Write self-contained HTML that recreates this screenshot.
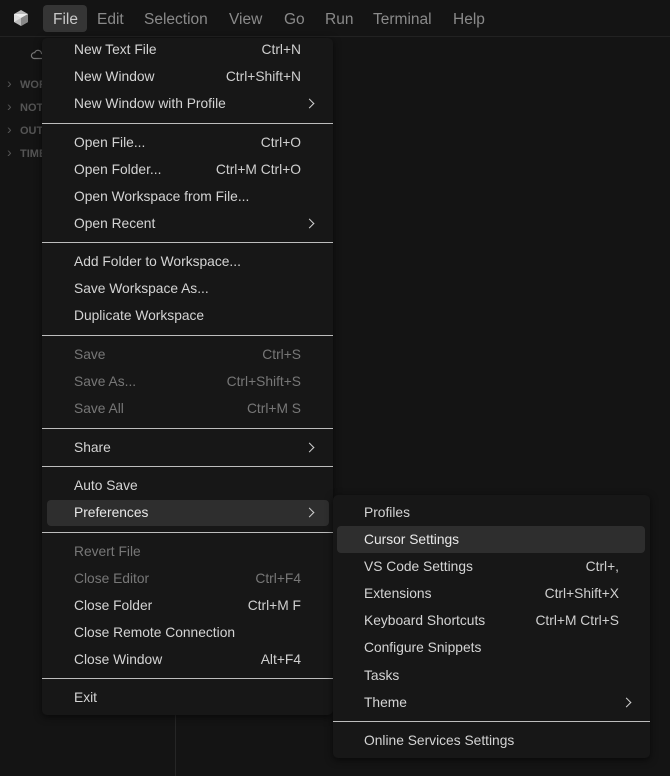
<!DOCTYPE html>
<html><head><meta charset="utf-8"><style>
*{margin:0;padding:0;box-sizing:border-box}
body{width:670px;height:776px;background:#141414;font-family:"Liberation Sans","DejaVu Sans",sans-serif;position:relative;overflow:hidden;color:#d0d0d0}
.bar{position:absolute;left:0;top:0;width:670px;height:37px;background:#141414;border-bottom:1px solid #222}
.mb{position:absolute;top:11px;font-size:15.5px;color:#8a8a8a}
.filebtn{position:absolute;left:43px;top:5px;width:44px;height:27px;background:#353535;border-radius:4px}
.side{position:absolute;font-size:11px;font-weight:bold;color:#555;left:20px}
.chev{position:absolute;left:7px;color:#555;font-size:14px}
.vline{position:absolute;left:175px;top:38px;width:1px;height:738px;background:#262626}
.menu{position:absolute;background:#171717;border-radius:5px;box-shadow:0 2px 8px rgba(0,0,0,.6)}
.it{position:absolute;font-size:13.8px;color:#d4d4d4;white-space:nowrap}
.sc{position:absolute;font-size:13.8px;color:#cfcfcf;text-align:right;white-space:nowrap}
.it.dis,.sc.dis{color:#777}
.sep{position:absolute;height:1px;background:#bdbdbd}
.hl{position:absolute;background:#2e2e2e;border-radius:4px}
.arr{position:absolute;width:7px;height:7px;border-right:1.3px solid #cfcfcf;border-top:1.3px solid #cfcfcf;transform:rotate(45deg)}
</style></head><body>
<div class="bar"></div>
<svg style="position:absolute;left:12px;top:9px" width="18" height="18" viewBox="0 0 18 18"><polygon points="9,1 16,5 16,13 9,17 2,13 2,5" fill="#bbb"/><polygon points="2,5 16,5 9,9" fill="#eee"/><polygon points="9,9 16,5 16,13 9,17" fill="#888"/><polygon points="9,9 2,5 2,13" fill="#ddd"/></svg>
<div class="filebtn"></div>
<div class="mb" style="left:53px;color:#c8c8c8">File</div>
<div class="mb" style="left:97px">Edit</div>
<div class="mb" style="left:144px">Selection</div>
<div class="mb" style="left:229px">View</div>
<div class="mb" style="left:284px">Go</div>
<div class="mb" style="left:325px">Run</div>
<div class="mb" style="left:373px">Terminal</div>
<div class="mb" style="left:453px">Help</div>
<div class="vline"></div>
<svg style="position:absolute;left:30px;top:48px" width="15" height="12" viewBox="0 0 15 12"><path d="M4 10.5h7.5a2.5 2.5 0 0 0 0-5 3.5 3.5 0 0 0-6.8-.8A2.8 2.8 0 0 0 4 10.5z" fill="none" stroke="#777" stroke-width="1.2"/></svg>
<div class="chev" style="top:75px">&#8250;</div><div class="side" style="top:79px">WORKSPACE</div>
<div class="chev" style="top:98px">&#8250;</div><div class="side" style="top:102px">NOTEPADS</div>
<div class="chev" style="top:121px">&#8250;</div><div class="side" style="top:125px">OUTLINE</div>
<div class="chev" style="top:144px">&#8250;</div><div class="side" style="top:148px">TIMELINE</div>

<div class="menu" style="left:42px;top:38px;width:291px;height:677px"></div>
<div class="hl" style="left:47px;top:500px;width:282px;height:26px"></div>
<div class="it" style="left:74px;top:42px">New Text File</div><div class="sc" style="right:369px;top:42px">Ctrl+N</div>
<div class="it" style="left:74px;top:69px">New Window</div><div class="sc" style="right:369px;top:69px">Ctrl+Shift+N</div>
<div class="it" style="left:74px;top:96px">New Window with Profile</div><div class="arr" style="left:306px;top:100px"></div>
<div class="sep" style="left:42px;top:123px;width:291px"></div>
<div class="it" style="left:74px;top:135px">Open File...</div><div class="sc" style="right:369px;top:135px">Ctrl+O</div>
<div class="it" style="left:74px;top:162px">Open Folder...</div><div class="sc" style="right:369px;top:162px">Ctrl+M Ctrl+O</div>
<div class="it" style="left:74px;top:189px">Open Workspace from File...</div>
<div class="it" style="left:74px;top:216px">Open Recent</div><div class="arr" style="left:306px;top:220px"></div>
<div class="sep" style="left:42px;top:242px;width:291px"></div>
<div class="it" style="left:74px;top:254px">Add Folder to Workspace...</div>
<div class="it" style="left:74px;top:281px">Save Workspace As...</div>
<div class="it" style="left:74px;top:308px">Duplicate Workspace</div>
<div class="sep" style="left:42px;top:335px;width:291px"></div>
<div class="it dis" style="left:74px;top:347px">Save</div><div class="sc dis" style="right:369px;top:347px">Ctrl+S</div>
<div class="it dis" style="left:74px;top:374px">Save As...</div><div class="sc dis" style="right:369px;top:374px">Ctrl+Shift+S</div>
<div class="it dis" style="left:74px;top:401px">Save All</div><div class="sc dis" style="right:369px;top:401px">Ctrl+M S</div>
<div class="sep" style="left:42px;top:428px;width:291px"></div>
<div class="it" style="left:74px;top:440px">Share</div><div class="arr" style="left:306px;top:444px"></div>
<div class="sep" style="left:42px;top:466px;width:291px"></div>
<div class="it" style="left:74px;top:478px">Auto Save</div>
<div class="it" style="left:74px;top:505px;color:#e8e8e8">Preferences</div><div class="arr" style="left:306px;top:509px"></div>
<div class="sep" style="left:42px;top:532px;width:291px"></div>
<div class="it dis" style="left:74px;top:544px">Revert File</div>
<div class="it dis" style="left:74px;top:571px">Close Editor</div><div class="sc dis" style="right:369px;top:571px">Ctrl+F4</div>
<div class="it" style="left:74px;top:598px">Close Folder</div><div class="sc" style="right:369px;top:598px">Ctrl+M F</div>
<div class="it" style="left:74px;top:625px">Close Remote Connection</div>
<div class="it" style="left:74px;top:652px">Close Window</div><div class="sc" style="right:369px;top:652px">Alt+F4</div>
<div class="sep" style="left:42px;top:678px;width:291px"></div>
<div class="it" style="left:74px;top:690px">Exit</div>

<div class="menu" style="left:333px;top:495px;width:317px;height:263px"></div>
<div class="hl" style="left:337px;top:526px;width:308px;height:27px"></div>
<div class="it" style="left:364px;top:505px">Profiles</div>
<div class="it" style="left:364px;top:532px;color:#e8e8e8">Cursor Settings</div>
<div class="it" style="left:364px;top:559px">VS Code Settings</div><div class="sc" style="right:51px;top:559px">Ctrl+,</div>
<div class="it" style="left:364px;top:586px">Extensions</div><div class="sc" style="right:51px;top:586px">Ctrl+Shift+X</div>
<div class="it" style="left:364px;top:613px">Keyboard Shortcuts</div><div class="sc" style="right:51px;top:613px">Ctrl+M Ctrl+S</div>
<div class="it" style="left:364px;top:640px">Configure Snippets</div>
<div class="it" style="left:364px;top:668px">Tasks</div>
<div class="it" style="left:364px;top:695px">Theme</div><div class="arr" style="left:623px;top:699px"></div>
<div class="sep" style="left:333px;top:721px;width:317px"></div>
<div class="it" style="left:364px;top:733px">Online Services Settings</div>
</body></html>
